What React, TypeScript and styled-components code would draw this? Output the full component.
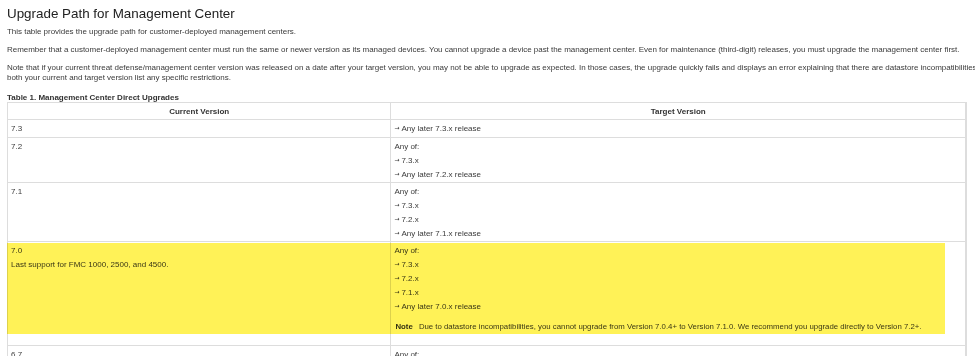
import styled, { createGlobalStyle } from 'styled-components';

const Global = createGlobalStyle`
  body {
    margin: 0;
    background: #fff;
    font-family: "Liberation Sans", Arial, sans-serif;
    color: #3a3a3a;
    overflow: hidden;
  }
`;

const Page = styled.div`
  width: 1150px;
  padding: 5px 0 0 7px;
`;

const Title = styled.h1`
  margin: 0 0 4px;
  font-size: 13.4px;
  font-weight: 400;
  line-height: 18px;
  color: #222;
`;

const Para = styled.p`
  margin: 0 0 8px;
  font-size: 8px;
  letter-spacing: -0.03px;
  line-height: 10px;
`;

const Caption = styled.div`
  margin-top: 10px;
  margin-bottom: -1px;
  font-size: 8px;
  line-height: 10px;
  font-weight: 700;
  color: #333;
`;

const TableWrap = styled.div`
  position: relative;
  width: 960px;
`;

const Table = styled.table`
  width: 100%;
  border-collapse: collapse;
  table-layout: fixed;
  font-size: 8px;
  border-left: 1px solid #ddd;
  border-right: 2px solid #ddd;
`;

const Th = styled.th`
  border: 1px solid #ddd;
  height: 16px;
  padding: 0;
  font-weight: 700;
  text-align: center;
  color: #333;
`;

const Td = styled.td<{ $pad?: number }>`
  border: 1px solid #ddd;
  vertical-align: top;
  padding: 2px 3px ${(p) => p.$pad ?? 0}px;
`;

const Line = styled.div`
  height: 14px;
  line-height: 14px;
  white-space: nowrap;
`;

const Arrow = styled.span`
  font-family: "DejaVu Sans", sans-serif;
  font-size: 6px;
  line-height: 0;
  margin-right: 2px;
  vertical-align: 1px;
`;

const Note = styled.div`
  margin-top: 6px;
  padding-left: 1px;
  font-size: 7.8px;
  line-height: 14px;
  white-space: nowrap;
  b {
    font-weight: 700;
    color: #333;
    margin-right: 4px;
  }
`;

const Highlight = styled.div`
  position: absolute;
  left: 0;
  top: 141px;
  width: 938px;
  height: 91px;
  background: #fff257;
  mix-blend-mode: multiply;
  pointer-events: none;
`;

const rows: { cur: string[]; target: string[]; note?: string; pad?: number }[] = [
  { cur: ['7.3'], target: ['→Any later 7.3.x release'], pad: 1 },
  { cur: ['7.2'], target: ['Any of:', '→7.3.x', '→Any later 7.2.x release'] },
  { cur: ['7.1'], target: ['Any of:', '→7.3.x', '→7.2.x', '→Any later 7.1.x release'] },
  {
    cur: ['7.0', 'Last support for FMC 1000, 2500, and 4500.'],
    target: ['Any of:', '→7.3.x', '→7.2.x', '→7.1.x', '→Any later 7.0.x release'],
    note: 'Due to datastore incompatibilities, you cannot upgrade from Version 7.0.4+ to Version 7.1.0. We recommend you upgrade directly to Version 7.2+.',
    pad: 11,
  },
  { cur: ['6.7'], target: ['Any of:', '→7.3.x'] },
];

const renderLine = (t: string) =>
  t.startsWith('→') ? (
    <Line key={t}>
      <Arrow>→</Arrow>
      {t.slice(1)}
    </Line>
  ) : (
    <Line key={t}>{t}</Line>
  );

export default function App() {
  return (
    <Page>
      <Global />
      <Title>Upgrade Path for Management Center</Title>
      <Para>This table provides the upgrade path for customer-deployed management centers.</Para>
      <Para>
        Remember that a customer-deployed management center must run the same or newer version as its managed devices. You cannot upgrade a device past the management center. Even for maintenance (third-digit) releases, you must upgrade the management center first.
      </Para>
      <Para>
        Note that if your current threat defense/management center version was released on a date after your target version, you may not be able to upgrade as expected. In those cases, the upgrade quickly fails and displays an error explaining that there are datastore incompatibilities between the two versions. The release notes for both your current and target version list any specific restrictions.
      </Para>
      <Caption>Table 1. Management Center Direct Upgrades</Caption>
      <TableWrap>
        <Table>
          <colgroup>
            <col style={{ width: '40%' }} />
            <col style={{ width: '60%' }} />
          </colgroup>
          <thead>
            <tr>
              <Th>Current Version</Th>
              <Th>Target Version</Th>
            </tr>
          </thead>
          <tbody>
            {rows.map((r) => (
              <tr key={r.cur[0]}>
                <Td $pad={r.pad ?? 0}>{r.cur.map(renderLine)}</Td>
                <Td $pad={r.pad ?? 0}>
                  {r.target.map(renderLine)}
                  {r.note && (
                    <Note>
                      <b>Note</b> {r.note}
                    </Note>
                  )}
                </Td>
              </tr>
            ))}
          </tbody>
        </Table>
        <Highlight />
      </TableWrap>
    </Page>
  );
}
